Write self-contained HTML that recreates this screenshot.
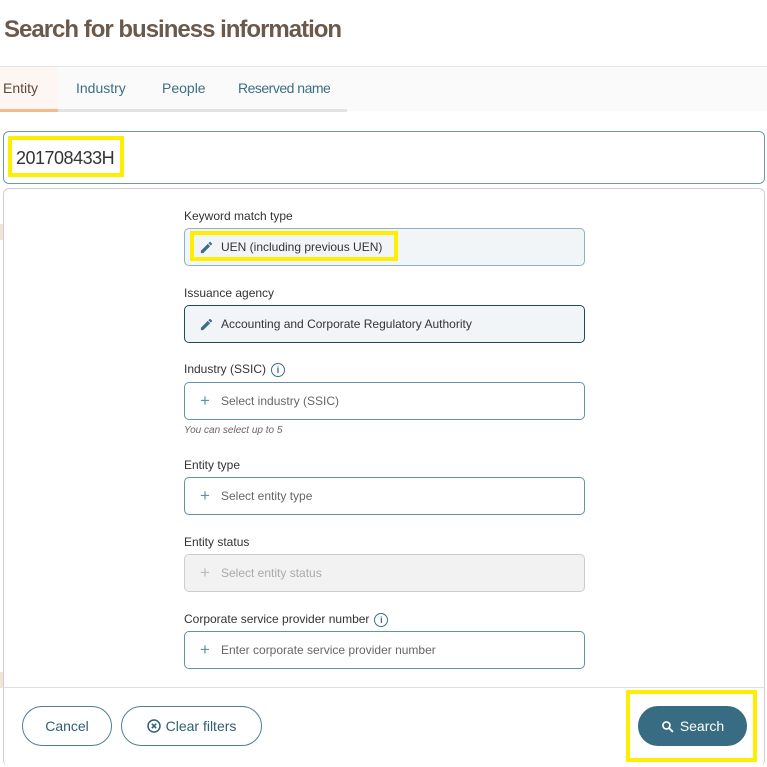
<!DOCTYPE html>
<html><head><style>
body{margin:0;width:767px;height:767px;background:#fff;font-family:"Liberation Sans",sans-serif;position:relative;overflow:hidden}
.a{position:absolute}
h1{position:absolute;left:4px;top:16px;margin:0;font-size:24px;font-weight:bold;color:#6b5a4b;letter-spacing:-1px}
.tabs{left:0;top:66px;width:767px;height:44px;background:#fafafa;border-top:1px solid #e6e6e6}
.tab{position:absolute;top:14px;font-size:14px;color:#3d6e84}
.lbl{position:absolute;left:184px;font-size:12px;color:#333}
.f{position:absolute;left:184px;width:401px;height:36px;border:1px solid #5f93a8;border-radius:5px;font-size:12px;color:#333;box-sizing:border-box}
.f span{position:absolute;left:36px;top:11px}
.plus{position:absolute;left:15px;top:9px;font-size:17px;color:#5f93a8;line-height:16px}
.btn{position:absolute;top:706px;height:40px;border:1px solid #4e7f94;border-radius:20px;box-sizing:border-box;font-size:14px;color:#2f5f74;display:flex;align-items:center;justify-content:center}
.y{position:absolute;border:4px solid #ffee00;box-sizing:border-box}
.info{display:inline-block;width:12px;height:12px;border:1.5px solid #3d6e84;border-radius:50%;font-size:9px;line-height:12px;text-align:center;color:#3d6e84;font-weight:bold;vertical-align:middle;margin-left:5px}
</style></head><body>
<h1>Search for business information</h1>
<div class="a tabs"></div>
<div class="a" style="left:0;top:67px;width:58px;height:43px;background:#fdf6f2"></div>
<div class="a" style="left:0;top:109px;width:347px;height:3px;background:#e2e2e2"></div>
<div class="a" style="left:0;top:109px;width:58px;height:3px;background:#f5b98f"></div>
<div class="tab" style="left:3px;top:80px;color:#5b4a3c">Entity</div>
<div class="tab" style="left:76px;top:80px">Industry</div>
<div class="tab" style="left:162px;top:80px">People</div>
<div class="tab" style="left:238px;top:80px;letter-spacing:-0.5px">Reserved name</div>
<div class="a" style="left:3px;top:131px;width:762px;height:53px;border:1px solid #6a9ab0;border-radius:6px;box-sizing:border-box"></div>
<div class="a" style="left:16px;top:148px;font-size:18px;color:#333;letter-spacing:-0.5px">201708433H</div>
<div class="y" style="left:8px;top:136px;width:116px;height:41px"></div>
<div class="a" style="left:0;top:224px;width:4px;height:16px;background:#f1e5d8"></div>
<div class="a" style="left:0;top:672px;width:4px;height:16px;background:#f1e5d8"></div>
<div class="a" style="left:3px;top:188px;width:762px;height:578px;border:1px solid #cfcfcf;border-radius:6px;box-sizing:border-box;border-bottom:none"></div>
<div class="a" style="left:3px;top:687px;width:762px;height:1px;background:#ddd"></div>

<div class="lbl" style="top:209px">Keyword match type</div>
<div class="f" style="top:228px;height:38px;background:#f1f5f8;border-color:#8fb2c2"><svg class="a" style="left:14px;top:11px" width="15" height="15" viewBox="0 0 24 24"><path fill="#3d6e84" d="M3 17.25V21h3.750L17.8 9.94l-3.75-3.75L3 17.25zM20.7 7.04a1 1 0 000-1.41l-2.34-2.34a1 1 0 00-1.41 0l-1.83 1.83 3.75 3.75 1.83-1.830z"/></svg><span>UEN (including previous UEN)</span></div>
<div class="y" style="left:190px;top:231px;width:208px;height:30px"></div>
<div class="lbl" style="top:286px">Issuance agency</div>
<div class="f" style="top:305px;height:38px;background:#f1f5f8;border-color:#1f4a5c"><svg class="a" style="left:14px;top:11px" width="15" height="15" viewBox="0 0 24 24"><path fill="#3d6e84" d="M3 17.25V21h3.75L17.8 9.94l-3.75-3.75L3 17.25zM20.7 7.04a1 1 0 000-1.41l-2.34-2.34a1 1 0 00-1.41 0l-1.83 1.83 3.75 3.75 1.83-1.83z"/></svg><span>Accounting and Corporate Regulatory Authority</span></div>
<div class="lbl" style="top:362px">Industry (SSIC)<span class="info">i</span></div>
<div class="f" style="top:382px;height:38px;color:#666"><span class="plus" style="left:15px;top:10px">+</span><span>Select industry (SSIC)</span></div>
<div class="lbl" style="top:425px;font-size:10px;font-style:italic;color:#666">You can select up to 5</div>
<div class="lbl" style="top:458px">Entity type</div>
<div class="f" style="top:477px;height:38px;color:#666"><span class="plus" style="left:15px;top:10px">+</span><span>Select entity type</span></div>
<div class="lbl" style="top:535px">Entity status</div>
<div class="f" style="top:554px;height:38px;background:#f2f2f2;border-color:#ccc;color:#aaa"><span class="plus" style="left:15px;top:10px;color:#bbb">+</span><span>Select entity status</span></div>
<div class="lbl" style="top:612px">Corporate service provider number<span class="info">i</span></div>
<div class="f" style="top:631px;height:38px;color:#666"><span class="plus" style="left:15px;top:10px">+</span><span>Enter corporate service provider number</span></div>

<div class="btn" style="left:22px;width:90px">Cancel</div>
<div class="btn" style="left:121px;width:141px"><svg width="14" height="14" viewBox="0 0 14 14" style="margin-right:5px"><circle cx="7" cy="7" r="6" fill="none" stroke="#2f5f74" stroke-width="1.5"/><path d="M4.8 4.8l4.4 4.4M9.2 4.8l-4.4 4.4" stroke="#2f5f74" stroke-width="1.5"/></svg>Clear filters</div>
<div class="y" style="left:626px;top:690px;width:131px;height:72px"></div>
<div class="btn" style="left:638px;width:109px;background:#376c82;border-color:#376c82;color:#fff"><svg width="13" height="13" viewBox="0 0 24 24" style="margin-right:6px"><circle cx="10" cy="10" r="6.5" fill="none" stroke="#fff" stroke-width="3"/><path d="M15 15l6 6" stroke="#fff" stroke-width="3.5" stroke-linecap="round"/></svg>Search</div>
</body></html>
